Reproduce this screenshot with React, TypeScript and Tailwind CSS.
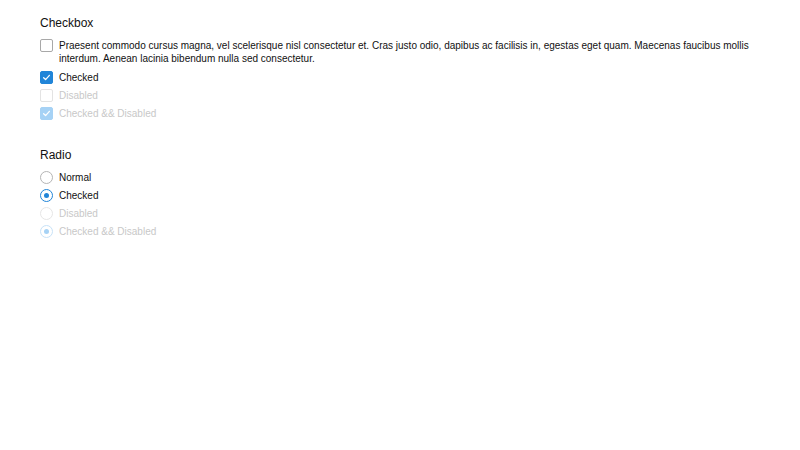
import React from "react";

function Check({ checked, disabled, label, extra }: { checked?: boolean; disabled?: boolean; label: string; extra?: string }) {
  const box = checked
    ? disabled
      ? "bg-[#a6d2f5] border-[#a6d2f5]"
      : "bg-[#2185d8] border-[#2185d8]"
    : disabled
    ? "bg-white border-[#e3e3e3]"
    : "bg-white border-[#a8a8a8]";
  return (
    <label className={`flex items-start gap-[6px] ${extra ?? ""}`}>
      <span className={`flex h-[13px] w-[13px] shrink-0 items-center justify-center rounded-[2px] border ${box}`}>
        {checked && (
          <svg width="9" height="9" viewBox="0 0 10 10">
            <path d="M1.8 5.2 L4 7.3 L8.2 2.6" fill="none" stroke="white" strokeWidth="1.4" strokeLinecap="round" strokeLinejoin="round" />
          </svg>
        )}
      </span>
      <span className={disabled ? "text-[#c8c8c8]" : "text-[#111]"}>{label}</span>
    </label>
  );
}

function Radio({ checked, disabled, label }: { checked?: boolean; disabled?: boolean; label: string }) {
  const ring = checked
    ? disabled
      ? "border-[#c7e2f8]"
      : "border-[#2185d8]"
    : disabled
    ? "border-[#e6e6e6]"
    : "border-[#b5b5b5]";
  const dot = disabled ? "bg-[#a6d2f5]" : "bg-[#2185d8]";
  return (
    <label className="flex items-center gap-[6px]">
      <span className={`flex h-[13px] w-[13px] shrink-0 items-center justify-center rounded-full border bg-white ${ring}`}>
        {checked && <span className={`h-[5px] w-[5px] rounded-full ${dot}`} />}
      </span>
      <span className={disabled ? "text-[#c8c8c8]" : "text-[#111]"}>{label}</span>
    </label>
  );
}

export default function App() {
  return (
    <div className="min-h-[450px] w-[800px] bg-white px-[40px] pt-[15px] text-[10px] leading-[13px]" style={{ fontFamily: '"Liberation Sans", Arial, sans-serif' }}>
      <h2 className="mb-[8px] text-[12px] leading-[16px] text-[#111]">Checkbox</h2>
      <div className="flex flex-col gap-[5px]">
        <Check extra="mb-[1px]" label="Praesent commodo cursus magna, vel scelerisque nisl consectetur et. Cras justo odio, dapibus ac facilisis in, egestas eget quam. Maecenas faucibus mollis interdum. Aenean lacinia bibendum nulla sed consectetur." />
        <Check checked label="Checked" />
        <Check disabled label="Disabled" />
        <Check checked disabled label="Checked && Disabled" />
      </div>
      <h2 className="mb-[8px] mt-[27px] text-[12px] leading-[16px] text-[#111]">Radio</h2>
      <div className="flex flex-col gap-[5px]">
        <Radio label="Normal" />
        <Radio checked label="Checked" />
        <Radio disabled label="Disabled" />
        <Radio checked disabled label="Checked && Disabled" />
      </div>
    </div>
  );
}
